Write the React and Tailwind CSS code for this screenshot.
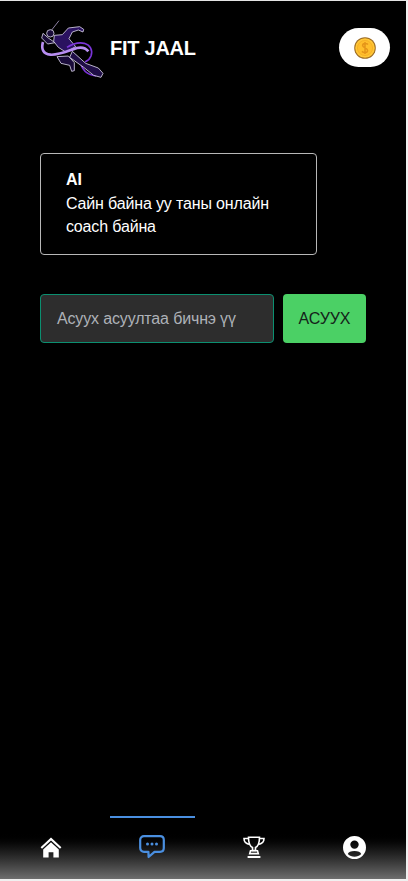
import React from 'react';

const font = { fontFamily: '"Liberation Sans", Arial, sans-serif' };

// Runner logo, drawn by hand on a 3x grid
function RunnerLogo() {
  return (
    <svg width="72" height="64" viewBox="0 0 216 192" fill="none">
      <path d="M72 8 L50 36" stroke="#a99bc4" strokeWidth="2.5" />
      <path d="M136 126 C138 150 152 170 184 174" stroke="#7a34d8" strokeWidth="5" />
      <path d="M40 60 L24 46 L20 60 L38 78 L60 74 Z" fill="#1a0c3a" stroke="#d9d2e8" strokeWidth="2.5" />
      <path d="M58 52 L82 50 L100 30 L134 26 L146 34 L144 42 L130 36 L112 42 L102 62 L122 86 L92 102 L70 88 L56 70 Z" fill="#2a1260" stroke="#d9d2e8" strokeWidth="2.5" />
      <circle cx="46" cy="46" r="11" fill="#1a0c3a" stroke="#d9d2e8" strokeWidth="2.5" />
      <path d="M66 116 L100 114 L118 134 L118 158 L110 160 L104 142 L78 136 Z" fill="#1a0c3a" stroke="#d9d2e8" strokeWidth="2.5" />
      <path d="M112 100 L152 136 L190 150 L204 166 L198 178 L176 172 L146 148 L104 118 Z" fill="#1f0e46" stroke="#d9d2e8" strokeWidth="2.5" />
      <path d="M96 88 C112 78 130 72 148 76 C166 82 174 96 168 114 C165 122 160 128 150 132" stroke="#7a34d8" strokeWidth="5" />
      <path d="M24 72 C18 92 24 108 46 110 C72 112 100 98 126 90 C140 87 152 90 160 100" stroke="#b88ef2" strokeWidth="8" />
    </svg>
  );
}

function Coin() {
  return (
    <svg width="22" height="22" viewBox="0 0 22 22">
      <circle cx="11" cy="11" r="10.8" fill="#9a6a24" />
      <circle cx="11" cy="11" r="9.8" fill="#ffc636" />
      <circle cx="11" cy="11" r="7.6" fill="#ffbe2c" stroke="#f0a520" strokeWidth="0.6" />
      <path d="M14 7.6 C12.5 6 8.6 6.2 8.6 8.6 C8.6 11 13.6 10.8 13.6 13.4 C13.6 15.9 9.5 16 7.9 14.4 M11 5 V17" stroke="#e5951a" strokeWidth="1.5" fill="none" />
    </svg>
  );
}

function HomeIcon() {
  return (
    <svg width="22" height="21" viewBox="0 0 22 21" fill="white">
      <path d="M11 0.5 L0.6 10.2 L2 11.7 L11 3.4 L20 11.7 L21.4 10.2 Z" />
      <path d="M11 5.2 L3.2 12.4 V20.5 H8.6 V15.2 H13.4 V20.5 H18.8 V12.4 Z" />
    </svg>
  );
}

function ChatIcon() {
  return (
    <svg width="26" height="24" viewBox="0 0 26 24" fill="none">
      <path d="M5 1.2 H21 C23.2 1.2 24.8 2.8 24.8 5 V13 C24.8 15.2 23.2 16.8 21 16.8 H15.5 L9.6 22 L9.4 16.8 H5 C2.8 16.8 1.2 15.2 1.2 13 V5 C1.2 2.8 2.8 1.2 5 1.2 Z" stroke="#4a8fe0" strokeWidth="2.2" strokeLinejoin="round" />
      <circle cx="8.5" cy="9" r="1.5" fill="#4a8fe0" />
      <circle cx="13" cy="9" r="1.5" fill="#4a8fe0" />
      <circle cx="17.5" cy="9" r="1.5" fill="#4a8fe0" />
    </svg>
  );
}

function TrophyIcon() {
  return (
    <svg width="22" height="23" viewBox="0 0 22 23" fill="none" stroke="white" strokeWidth="1.6">
      <path d="M5.5 1.2 H16.5 C16.5 6 15.5 10 12.5 11.5 V14.5 H9.5 V11.5 C6.5 10 5.5 6 5.5 1.2 Z" />
      <path d="M5.5 2.5 H1 C1 6 3 8 7 8.4 M16.5 2.5 H21 C21 6 19 8 15 8.4" />
      <path d="M7.5 14.8 H14.5 L15.3 17.6 H6.7 Z" />
      <path d="M4.6 21 H17.4" strokeWidth="2" />
    </svg>
  );
}

function ProfileIcon() {
  return (
    <svg width="23" height="23" viewBox="0 0 23 23">
      <path fillRule="evenodd" fill="white" d="M11.5 0 A11.5 11.5 0 1 1 11.5 23 A11.5 11.5 0 1 1 11.5 0 Z M11.5 4.4 A4.2 4.2 0 1 0 11.5 12.8 A4.2 4.2 0 1 0 11.5 4.4 Z M11.5 15 C8 15 5.2 16.2 4.8 18 C6.6 19.8 8.9 20.8 11.5 20.8 C14.1 20.8 16.4 19.8 18.2 18 C17.8 16.2 15 15 11.5 15 Z" />
    </svg>
  );
}

export default function App() {
  return (
    <div className="w-[408px] h-[881px] flex flex-col bg-black border-t border-t-[#e4e4e4] border-b-2 border-b-[#f0f0f0] border-r-2 border-r-[#f0f0f0]" style={font}>
      {/* Header */}
      <div className="flex items-start justify-between pl-[35px] pr-[16px] pt-[17px]">
        <div className="flex items-start gap-[3px]">
          <RunnerLogo />
          <span className="text-white text-[20px] font-bold leading-[24px] mt-[18px] tracking-[-0.25px]">FIT JAAL</span>
        </div>
        <div className="w-[51px] h-[39px] mt-[10px] rounded-[20px] bg-white flex items-center justify-center">
          <Coin />
        </div>
      </div>

      <div className="flex-1 px-[40px]">
        {/* AI message */}
        <div className="w-[277px] h-[102px] mt-[71px] rounded-[4px] border border-[#b8b8b8] pl-[25px] pr-[30px] pt-[14px] text-white text-[16px] leading-[23px] tracking-[-0.15px]">
          <div className="font-bold mb-[1px]">AI</div>
          <div>Сайн байна уу таны онлайн coach байна</div>
        </div>

        {/* Question input */}
        <div className="flex gap-[9px] mt-[39px]">
          <div className="w-[234px] h-[49px] rounded-[4px] border border-[#0b8f70] bg-[#2d2d2d] flex items-center pl-[16px] text-[#aeb2b8] text-[16px] tracking-[-0.15px]">
            Асуух асуултаа бичнэ үү
          </div>
          <div className="w-[83px] h-[49px] rounded-[4px] bg-[#4bd065] flex items-center justify-center text-[#14231a] text-[16px] tracking-[-0.1px]">
            АСУУХ
          </div>
        </div>
      </div>

      {/* Bottom nav */}
      <div className="h-[64px] grid grid-cols-4 pr-[1px] bg-gradient-to-b from-black from-25% to-[#6e6e6e]">
        <div className="flex items-center justify-center"><HomeIcon /></div>
        <div className="relative flex items-center justify-center">
          <div className="absolute top-[1px] left-[9px] w-[85px] h-[2px] bg-[#4a8fe0]" />
          <ChatIcon />
        </div>
        <div className="flex items-center justify-center pl-[2px]"><TrophyIcon /></div>
        <div className="flex items-center justify-center"><ProfileIcon /></div>
      </div>
    </div>
  );
}
